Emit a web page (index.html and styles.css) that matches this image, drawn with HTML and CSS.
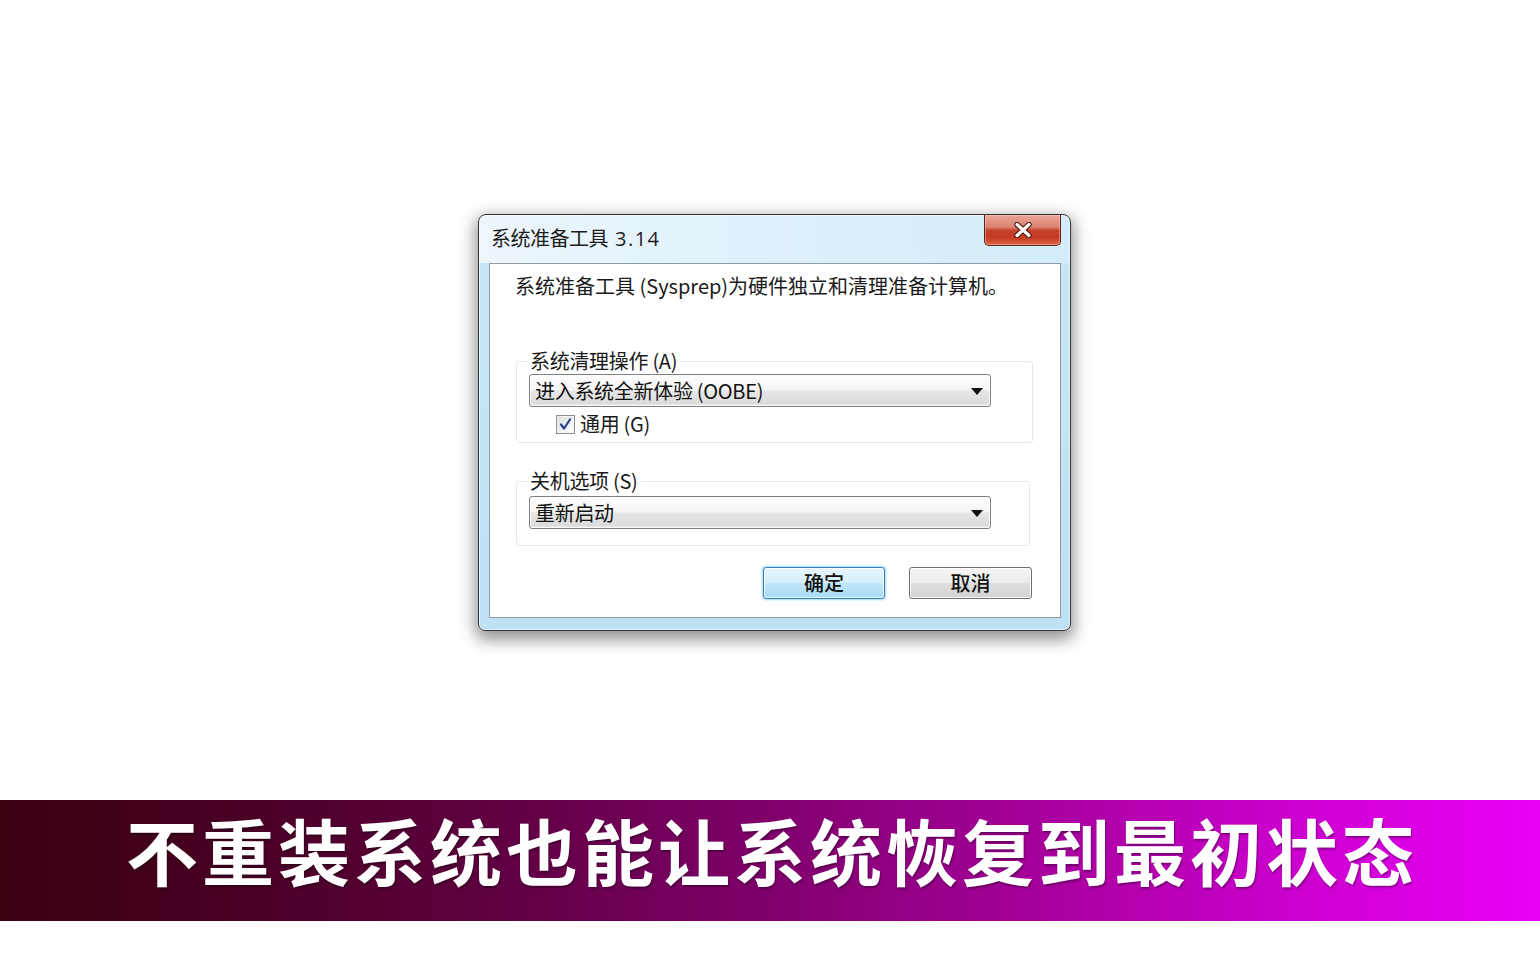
FILE: index.html
```html
<!DOCTYPE html>
<html lang="zh-CN">
<head>
<meta charset="utf-8">
<title>系统准备工具 3.14</title>
<link rel="stylesheet" href="styles.css">
</head>
<body>
<div class="page">
  <div class="stage">
    <div class="window">
      <div class="titlebar">
        <div class="title">系统准备工具 <span class="ver">3.14</span></div>
        <div class="close">
          <svg width="20" height="16" viewBox="0 0 20 16">
            <path d="M4 2.5 L16 13.5 M16 2.5 L4 13.5" stroke="#4a1a12" stroke-width="5.5" stroke-linecap="round"/>
            <path d="M4 2.5 L16 13.5 M16 2.5 L4 13.5" stroke="#ffffff" stroke-width="3.2" stroke-linecap="round"/>
          </svg>
        </div>
      </div>
      <div class="client">
        <p class="desc">系统准备工具 (Sysprep)为硬件独立和清理准备计算机。</p>
        <fieldset class="group group-a">
          <legend>系统清理操作 (A)</legend>
          <div class="combo">
            <span class="combo-text">进入系统全新体验 (OOBE)</span>
            <span class="arrow"></span>
          </div>
          <div class="check-row">
            <span class="checkbox">
              <svg width="17" height="17" viewBox="0 0 17 17">
                <path d="M4 8.5 L7 12.5 L13 3.5" fill="none" stroke="#2b3f91" stroke-width="2.2" stroke-linejoin="round" stroke-linecap="round"/>
              </svg>
            </span>
            <span class="check-label">通用 (G)</span>
          </div>
        </fieldset>
        <fieldset class="group group-s">
          <legend>关机选项 (S)</legend>
          <div class="combo">
            <span class="combo-text">重新启动</span>
            <span class="arrow"></span>
          </div>
        </fieldset>
        <div class="buttons">
          <div class="btn btn-default">确定</div>
          <div class="btn">取消</div>
        </div>
      </div>
    </div>
  </div>
  <div class="banner">不重装系统也能让系统恢复到最初状态</div>
</div>
</body>
</html>
```

FILE: styles.css
```css
html, body {
  margin: 0;
  padding: 0;
  background: #ffffff;
}

.page {
  width: 1540px;
  height: 963px;
  overflow: hidden;
  font-family: "Noto Sans CJK SC", "Noto Sans", sans-serif;
  color: #1a1a1a;
}

.stage {
  height: 800px;
  box-sizing: border-box;
  padding-top: 214px;
  padding-left: 478px;
}

.window {
  width: 593px;
  height: 417px;
  box-sizing: border-box;
  border: 1px solid #2f3337;
  border-radius: 8px 8px 7px 7px;
  padding: 0 9px 12px 10px;
  display: flex;
  flex-direction: column;
  background:
    linear-gradient(to right, #edf6fb 0%, #dff1fb 45%, #d2ecf9 100%) top / 100% 48px no-repeat,
    linear-gradient(#c9e6f7, #bfe1f4);
  box-shadow: 0 6px 16px 3px rgba(0, 0, 0, 0.42), inset 0 0 0 1px rgba(255, 255, 255, 0.6);
}

.titlebar {
  height: 48px;
  display: flex;
  justify-content: space-between;
  align-items: flex-start;
  flex-shrink: 0;
}

.title {
  margin-top: 11px;
  margin-left: 2px;
  font-size: 20px;
  line-height: 24px;
  color: #1c1c1c;
  letter-spacing: -0.5px;
  word-spacing: 3px;
}

.title .ver {
  font-family: "Open Sans", "Noto Sans", sans-serif;
  letter-spacing: 1.5px;
}

.close {
  width: 77px;
  height: 31px;
  box-sizing: border-box;
  border: 1px solid #5b2318;
  border-top: none;
  border-radius: 0 0 5px 5px;
  background: linear-gradient(#eaa699 0%, #dc8270 40%, #c6402a 52%, #c43a22 75%, #dd6444 100%);
  box-shadow: inset 0 0 0 1px rgba(255, 210, 200, 0.45);
  display: flex;
  align-items: center;
  justify-content: center;
}

.client {
  flex: 1;
  background: #ffffff;
  border: 1px solid #8f9ba6;
  display: flex;
  flex-direction: column;
}

.desc {
  margin: 10px 0 0 25px;
  font-size: 20px;
  line-height: 24px;
  letter-spacing: 0;
}

.group {
  margin: 0 0 0 26px;
  padding: 0 12px 6px 12px;
  border: 1px solid #e6e9ec;
  border-radius: 3px;
  min-inline-size: 0;
  box-sizing: border-box;
}

.group legend {
  padding: 0 3px 0 1px;
  font-size: 20px;
  line-height: 24px;
  letter-spacing: -0.3px;
}

.group-a {
  width: 517px;
  margin-top: 51px;
}

.group-s {
  width: 514px;
  margin-top: 26px;
  padding-bottom: 16px;
}

.group-s .combo {
  margin-top: 3px;
}

.combo {
  margin-top: 1px;
  width: 462px;
  height: 33px;
  box-sizing: border-box;
  border: 1px solid #7f7f7f;
  border-radius: 3px;
  background: linear-gradient(#fdfdfd 0%, #f5f5f5 48%, #e6e6e6 52%, #dcdcdc 92%, #f0f0f0 100%);
  box-shadow: inset 0 0 0 1px rgba(255, 255, 255, 0.8);
  display: flex;
  align-items: center;
  justify-content: space-between;
  padding: 0 7px 0 5px;
}

.combo-text {
  font-size: 20px;
  line-height: 24px;
  letter-spacing: -0.3px;
  color: #111;
}

.arrow {
  width: 0;
  height: 0;
  border-left: 6px solid transparent;
  border-right: 6px solid transparent;
  border-top: 7px solid #111;
  margin-top: 2px;
}

.check-row {
  margin-top: 5px;
  margin-left: 27px;
  height: 24px;
  display: flex;
  align-items: center;
  gap: 5px;
}

.checkbox {
  width: 19px;
  height: 19px;
  box-sizing: border-box;
  border: 1px solid #8e8f8f;
  background: linear-gradient(135deg, #dcdcdc, #ffffff);
  box-shadow: inset 0 0 0 1px #f4f4f4;
  display: flex;
  align-items: center;
  justify-content: center;
}

.check-label {
  font-size: 20px;
  line-height: 24px;
  letter-spacing: -0.3px;
}

.buttons {
  margin-top: 21px;
  margin-right: 28px;
  display: flex;
  justify-content: flex-end;
  gap: 24px;
}

.btn {
  width: 123px;
  height: 32px;
  box-sizing: border-box;
  border: 1px solid #707070;
  border-radius: 3px;
  background: linear-gradient(#f4f4f4 0%, #ececec 48%, #dedede 52%, #d2d2d2 100%);
  box-shadow: inset 0 0 0 1px rgba(255, 255, 255, 0.85);
  display: flex;
  align-items: center;
  justify-content: center;
  font-size: 20px;
  font-weight: 500;
  line-height: 24px;
  color: #111;
}

.btn-default {
  width: 122px;
  border-color: #3c7fb1;
  background: linear-gradient(#e8f6fd 0%, #d6effc 48%, #bfe5f9 52%, #a9dbf6 100%);
  box-shadow: inset 0 0 0 1px rgba(255, 255, 255, 0.7), 0 0 2px 1px rgba(80, 190, 240, 0.55);
}

.banner {
  height: 121px;
  box-sizing: border-box;
  padding-top: 13px;
  padding-left: 4px;
  text-align: center;
  font-family: "Noto Sans CJK SC", sans-serif;
  font-weight: 700;
  font-size: 72px;
  line-height: 72px;
  letter-spacing: 4px;
  color: #ffffff;
  text-shadow: 1px 2px 2px rgba(0, 0, 0, 0.35);
  background: linear-gradient(to right, #3a0010 0%, #470022 14%, #5f0040 32%, #80006c 50%, #a8009e 68%, #cc00cf 84%, #ea00f7 100%);
}
```
